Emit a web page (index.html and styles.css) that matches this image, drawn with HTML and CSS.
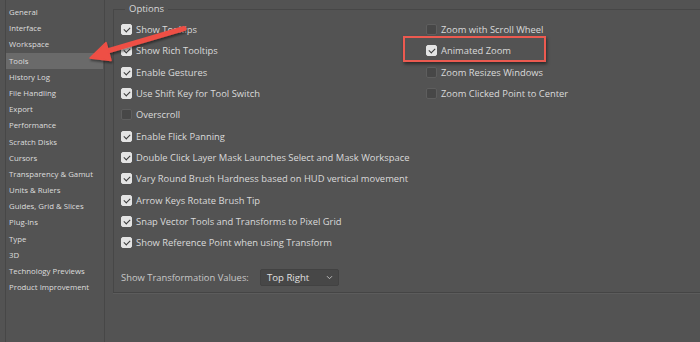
FILE: index.html
```html
<!DOCTYPE html>
<html>
<head>
<meta charset="utf-8">
<link rel="stylesheet" href="styles.css">
</head>
<body>
<div class="page">
  <nav class="sidebar">
    <div class="item">General</div>
    <div class="item">Interface</div>
    <div class="item">Workspace</div>
    <div class="item selected">Tools</div>
    <div class="item">History Log</div>
    <div class="item">File Handling</div>
    <div class="item">Export</div>
    <div class="item">Performance</div>
    <div class="item">Scratch Disks</div>
    <div class="item">Cursors</div>
    <div class="item">Transparency &amp; Gamut</div>
    <div class="item">Units &amp; Rulers</div>
    <div class="item">Guides, Grid &amp; Slices</div>
    <div class="item">Plug-Ins</div>
    <div class="item">Type</div>
    <div class="item">3D</div>
    <div class="item">Technology Previews</div>
    <div class="item">Product Improvement</div>
  </nav>
  <main class="main">
    <fieldset class="options">
      <legend>Options</legend>
      <div class="cols">
        <div class="col">
          <label class="opt"><span class="box on"></span>Show Tooltips</label>
          <label class="opt"><span class="box on"></span>Show Rich Tooltips</label>
          <label class="opt"><span class="box on"></span>Enable Gestures</label>
          <label class="opt"><span class="box on"></span>Use Shift Key for Tool Switch</label>
          <label class="opt"><span class="box"></span>Overscroll</label>
          <label class="opt"><span class="box on"></span>Enable Flick Panning</label>
          <label class="opt"><span class="box on"></span>Double Click Layer Mask Launches Select and Mask Workspace</label>
          <label class="opt"><span class="box on"></span>Vary Round Brush Hardness based on HUD vertical movement</label>
          <label class="opt"><span class="box on"></span>Arrow Keys Rotate Brush Tip</label>
          <label class="opt"><span class="box on"></span>Snap Vector Tools and Transforms to Pixel Grid</label>
          <label class="opt"><span class="box on"></span>Show Reference Point when using Transform</label>
        </div>
        <div class="col right">
          <label class="opt"><span class="box"></span>Zoom with Scroll Wheel</label>
          <label class="opt"><span class="box on"></span>Animated Zoom</label>
          <label class="opt"><span class="box"></span>Zoom Resizes Windows</label>
          <label class="opt"><span class="box"></span>Zoom Clicked Point to Center</label>
        </div>
      </div>
      <div class="transform">
        <span class="tlabel">Show Transformation Values:</span>
        <div class="select">Top Right
          <svg class="chev" width="7" height="5" viewBox="0 0 7 5"><path d="M1 1.2 L3.5 3.7 L6 1.2" fill="none" stroke="#bdbdbd" stroke-width="1"/></svg>
        </div>
      </div>
    </fieldset>
  </main>
</div>
<div class="highlight"></div>
<svg class="arrow" width="700" height="342" viewBox="0 0 700 342">
  <defs>
    <filter id="sh" x="-20%" y="-50%" width="140%" height="200%">
      <feDropShadow dx="1" dy="2" stdDeviation="1.2" flood-color="#000" flood-opacity="0.45"/>
    </filter>
  </defs>
  <g filter="url(#sh)" fill="#ee4f45" stroke="#ee4f45">
    <line x1="184" y1="28.5" x2="104" y2="52" stroke-width="5" stroke-linecap="round"/>
    <path d="M90 58 L106 42.5 L111 60.5 Z" stroke-width="1.5" stroke-linejoin="round"/>
  </g>
</svg>
</body>
</html>
```
FILE: styles.css
```css
* { box-sizing: border-box; }
html, body { margin: 0; padding: 0; }
body {
  width: 700px;
  height: 342px;
  overflow: hidden;
  background: #535353;
  font-family: "Open Sans", "Noto Sans", sans-serif;
  color: #d6d6d6;
  position: relative;
}
.page {
  display: flex;
  height: 342px;
  padding-left: 5px;
}
.sidebar {
  width: 100px;
  height: 360px;
  margin-top: -10px;
  border-left: 1px solid #474747;
  border-right: 1px solid #474747;
  padding-top: 14px;
  flex: none;
}
.item {
  height: 16.2px;
  line-height: 16px;
  font-size: 7.8px;
  padding-left: 3px;
  white-space: nowrap;
  color: #dedede;
}
.item.selected {
  background: #6a6a6a;
  margin-right: 1px;
}
.main {
  flex: 1;
  padding-left: 8px;
  padding-top: 2px;
}
.options {
  margin: 0 -20px 0 0;
  border: 1px solid #474747;
  border-bottom: 1px solid #454545;
  box-shadow: 0 1px 0 #5c5c5c;
  padding: 3px 0 0 7px;
  height: 291px;
}
.options legend {
  font-size: 9.5px;
  color: #d8d8d8;
  padding: 0 4px;
  margin-left: 4px;
  line-height: 14px;
}
.cols {
  display: flex;
}
.col {
  width: 305px;
  display: flex;
  flex-direction: column;
}
.col.right { width: 300px; }
.opt {
  display: flex;
  align-items: center;
  height: 21.3px;
  font-size: 9.4px;
  white-space: nowrap;
  color: #dadada;
}
.box {
  width: 11px;
  height: 11px;
  border-radius: 2px;
  background: #474747;
  border: 1px solid #5e5e5e;
  margin-right: 4px;
  flex: none;
  position: relative;
}
.box.on {
  background: #e4e4e4;
  border-color: #e4e4e4;
}
.box.on::after {
  content: "";
  position: absolute;
  left: 2.5px;
  top: 1px;
  width: 3px;
  height: 5px;
  border: solid #3a3a3a;
  border-width: 0 1.6px 1.6px 0;
  transform: rotate(45deg);
}
.transform {
  display: flex;
  align-items: center;
  margin-top: 16px;
}
.tlabel {
  font-size: 9.4px;
  color: #c8c8c8;
  width: 139px;
  white-space: nowrap;
}
.select {
  width: 79px;
  height: 17px;
  background: #474747;
  border: 1px solid #424242;
  border-radius: 2px;
  font-size: 9.6px;
  color: #e0e0e0;
  padding-left: 6px;
  display: flex;
  align-items: center;
  justify-content: space-between;
  padding-right: 5px;
}
.highlight {
  position: absolute;
  left: 403px;
  top: 36px;
  width: 143px;
  height: 26px;
  border: 2px solid #ec5a50;
  box-shadow: 1px 2px 3px rgba(0,0,0,0.5);
}
.arrow {
  position: absolute;
  left: 0;
  top: 0;
  pointer-events: none;
}
```
